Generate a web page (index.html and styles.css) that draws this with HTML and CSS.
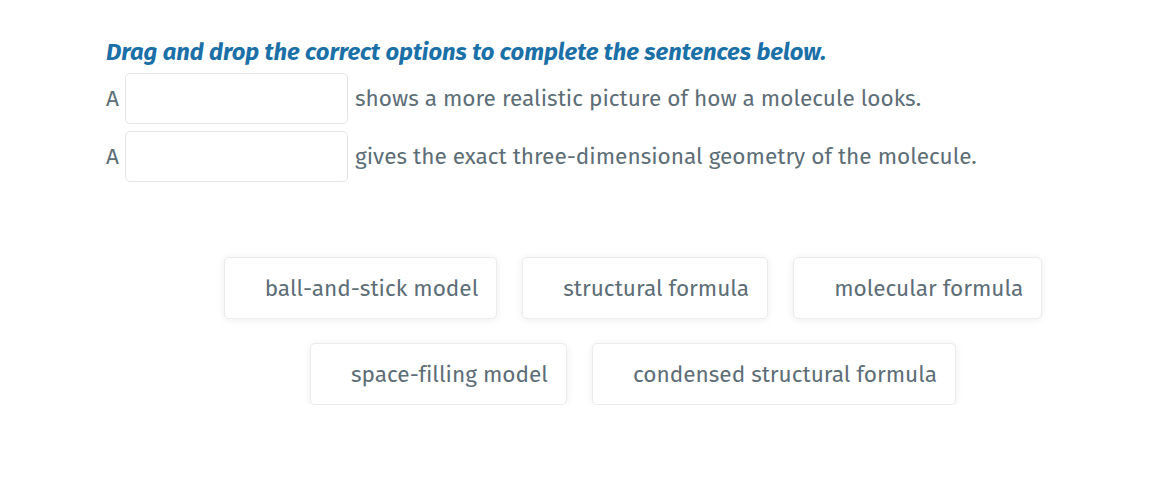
FILE: index.html
```html
<!DOCTYPE html>
<html>
<head>
<meta charset="utf-8">
<link rel="stylesheet" href="styles.css">
</head>
<body>
<main class="question">
  <h1 class="prompt">Drag and drop the correct options to complete the sentences below.</h1>
  <div class="sentence">
    <span class="lead">A</span>
    <span class="drop"></span>
    <span class="rest">shows a more realistic picture of how a molecule looks.</span>
  </div>
  <div class="sentence">
    <span class="lead">A</span>
    <span class="drop"></span>
    <span class="rest">gives the exact three-dimensional geometry of the molecule.</span>
  </div>
  <div class="options">
    <div class="chip">ball-and-stick model</div>
    <div class="chip">structural formula</div>
    <div class="chip">molecular formula</div>
    <div class="chip">space-filling model</div>
    <div class="chip">condensed structural formula</div>
  </div>
</main>
</body>
</html>
```

FILE: styles.css
```css
html, body {
  margin: 0;
  padding: 0;
  background: #ffffff;
}
body {
  font-family: "Fira Sans", Roboto, "Liberation Sans", sans-serif;
  font-variant-ligatures: none;
  color: #5d6e77;
}
.question {
  padding: 37px 0 0 106px;
  width: 1054px;
}
.prompt {
  margin: 0 0 6px 0;
  font-size: 23.8px;
  line-height: 30px;
  font-weight: 700;
  font-style: italic;
  color: #1b70a8;
}
.sentence {
  display: flex;
  align-items: center;
  margin-bottom: 7px;
  font-size: 22.6px;
}
.lead {
  width: 19px;
}
.drop {
  width: 221px;
  height: 49px;
  border: 1px solid #e6e6e6;
  border-radius: 5px;
  margin-right: 7px;
}
.options {
  display: flex;
  flex-wrap: wrap;
  justify-content: center;
  column-gap: 25px;
  row-gap: 24px;
  margin-top: 75px;
}
.chip {
  height: 60px;
  display: flex;
  align-items: center;
  padding: 0 18px 0 40px;
  border: 1px solid #ebebeb;
  border-radius: 5px;
  box-shadow: 0 1px 8px rgba(0,0,0,0.07);
  font-size: 22.6px;
  background: #fff;
}
```
